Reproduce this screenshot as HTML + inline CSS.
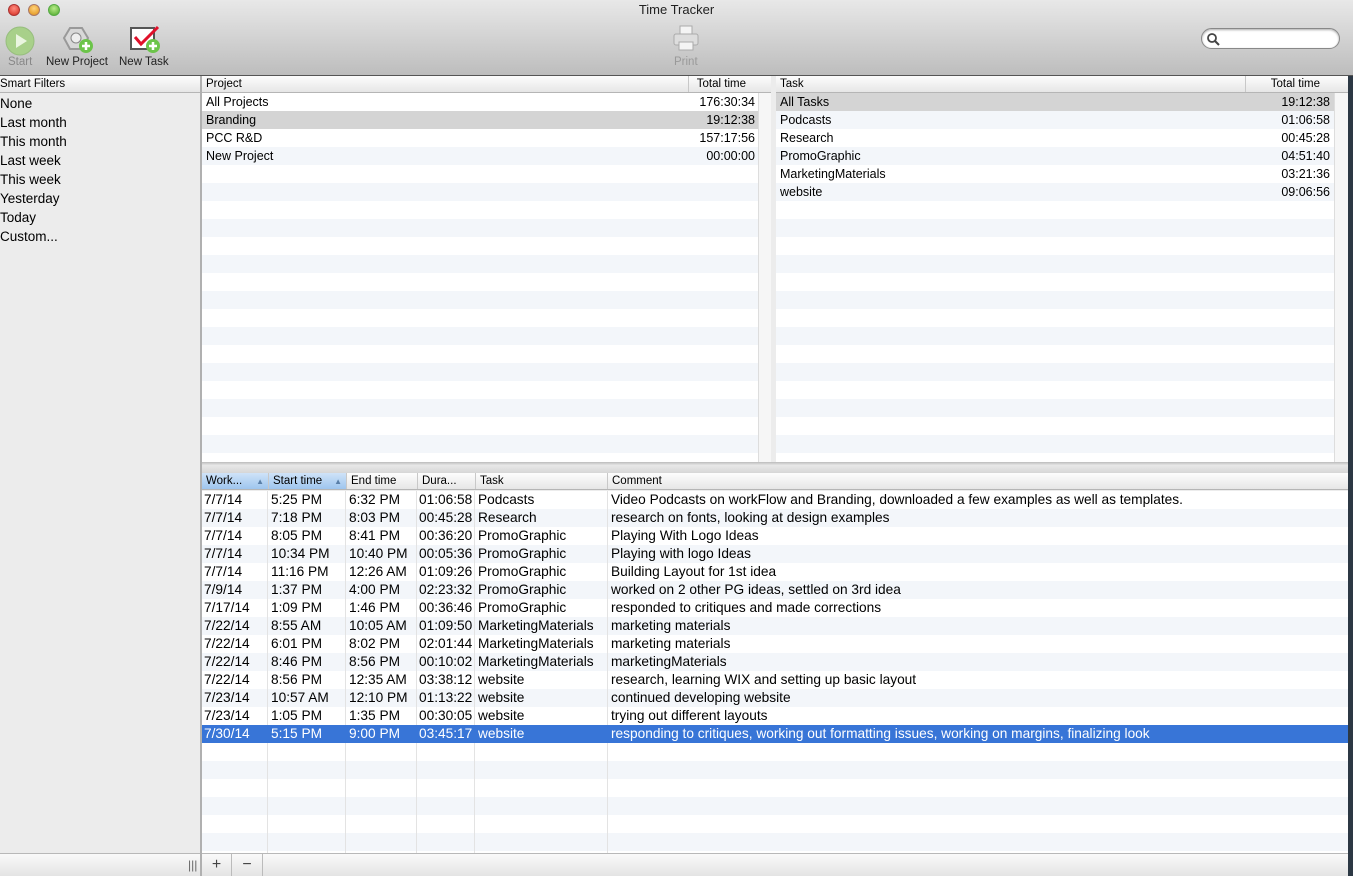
<!DOCTYPE html>
<html><head><meta charset="utf-8"><style>
*{margin:0;padding:0;box-sizing:border-box}
body{width:1353px;height:876px;overflow:hidden;position:relative;background:#ececec;font-family:"Liberation Sans","DejaVu Sans",sans-serif;font-size:12.5px;color:#000}
.a{position:absolute}
.tb{left:0;top:0;width:1353px;height:76px;background:linear-gradient(#e8e8e8,#bdbdbd);border-bottom:1px solid #555}
.hdr{height:17px;background:linear-gradient(#fdfdfd,#e6e6e6);border-bottom:1px solid #b5b5b5;font-size:11.5px;line-height:17px}
.hdr span{position:absolute;top:0;padding-left:4px;border-left:1px solid #c8c8c8;height:16px}
.stripe{background:repeating-linear-gradient(#fff 0,#fff 18px,#f3f6fa 18px,#f3f6fa 36px)}
.row{position:absolute;height:18px;line-height:18px;white-space:nowrap}
.r{text-align:right}
.c span{position:absolute;top:0}
</style></head><body>
<div class="a tb">
 <div class="a" style="left:8px;top:4px;width:12px;height:12px;border-radius:6px;background:radial-gradient(circle at 50% 35%,#ff8d80,#d42a1e);border:1px solid #a33"></div>
 <div class="a" style="left:28px;top:4px;width:12px;height:12px;border-radius:6px;background:radial-gradient(circle at 50% 35%,#ffd27a,#de8f14);border:1px solid #a76"></div>
 <div class="a" style="left:48px;top:4px;width:12px;height:12px;border-radius:6px;background:radial-gradient(circle at 50% 35%,#b8ec8a,#4ea628);border:1px solid #5a4"></div>
 <div class="a" style="left:0;width:1353px;top:2px;text-align:center;font-size:13px;color:#222">Time Tracker</div>
 <svg class="a" style="left:4px;top:25px" width="32" height="32"><circle cx="16" cy="16" r="14" fill="#a8d08a" stroke="#97bd7e"/><path d="M12 9 L23 16 L12 23Z" fill="#eaf5e0"/></svg>
 <div class="a" style="left:8px;top:56px;font-size:11.5px;color:#888">Start</div>
 <svg class="a" style="left:60px;top:25px" width="36" height="30"><path d="M10 3 L22 3 L28 13 L22 24 L10 24 L4 13Z" fill="#d8d8d8" stroke="#999" stroke-width="2"/><circle cx="16" cy="13" r="5" fill="#eee" stroke="#888"/><circle cx="26" cy="21" r="7" fill="#6cc44a"/><path d="M26 17v8M22 21h8" stroke="#fff" stroke-width="2.5"/></svg>
 <div class="a" style="left:46px;top:56px;font-size:11.5px;color:#222">New Project</div>
 <svg class="a" style="left:128px;top:25px" width="36" height="30"><rect x="3" y="3" width="23" height="21" fill="#fff" stroke="#555" stroke-width="2"/><path d="M7 12 L13 19 L30 2" fill="none" stroke="#e0102a" stroke-width="3"/><circle cx="25" cy="21" r="7" fill="#6cc44a"/><path d="M25 17v8M21 21h8" stroke="#fff" stroke-width="2.5"/></svg>
 <div class="a" style="left:119px;top:56px;font-size:11.5px;color:#222">New Task</div>
 <svg class="a" style="left:672px;top:24px" width="28" height="30"><rect x="8" y="2" width="12" height="8" fill="#f4f4f4" stroke="#aaa"/><rect x="2" y="10" width="24" height="11" rx="2" fill="#ddd" stroke="#aaa"/><rect x="7" y="18" width="14" height="8" fill="#f4f4f4" stroke="#aaa"/></svg>
 <div class="a" style="left:674px;top:56px;font-size:11.5px;color:#999">Print</div>
 <div class="a" style="left:1201px;top:28px;width:139px;height:21px;border-radius:11px;background:#fff;border:1px solid #888;box-shadow:inset 0 1px 2px #aaa"></div>
 <svg class="a" style="left:1206px;top:32px" width="14" height="14"><circle cx="6" cy="6" r="4" fill="none" stroke="#444" stroke-width="1.8"/><path d="M9 9l4 4" stroke="#444" stroke-width="2"/></svg>
</div>
<div class="a" style="left:1348px;top:76px;width:5px;height:800px;background:#2c3844"></div>

<!-- sidebar -->
<div class="a hdr" style="left:0;top:76px;width:200px"><span style="left:-4px;border:0;padding-left:4px">Smart Filters</span></div>
<div class="a" style="left:200px;top:76px;width:2px;height:800px;background:#b0b0b0"></div>
<div class="a" style="left:0;top:94px;font-size:13.5px;line-height:19px">None<br>Last month<br>This month<br>Last week<br>This week<br>Yesterday<br>Today<br>Custom...</div>

<!-- project pane -->
<div class="a hdr" style="left:202px;top:76px;width:569px"><span style="left:0;border:0">Project</span><span style="left:486px;width:72px;text-align:right;padding-right:14px">Total time</span></div>
<div class="a stripe" style="left:202px;top:93px;width:556px;height:369px"></div>
<div class="a" style="left:758px;top:93px;width:13px;height:369px;background:#f6f6f6;border-left:1px solid #ddd"></div>
<div class="row" style="left:202px;top:111px;width:556px;background:#d4d4d4"></div>
<div class="row" style="left:206px;top:93px">All Projects</div><div class="row r" style="left:600px;top:93px;width:155px">176:30:34</div>
<div class="row" style="left:206px;top:111px">Branding</div><div class="row r" style="left:600px;top:111px;width:155px">19:12:38</div>
<div class="row" style="left:206px;top:129px">PCC R&amp;D</div><div class="row r" style="left:600px;top:129px;width:155px">157:17:56</div>
<div class="row" style="left:206px;top:147px">New Project</div><div class="row r" style="left:600px;top:147px;width:155px">00:00:00</div>
<div class="a" style="left:202px;top:462px;width:1146px;height:11px;background:linear-gradient(#bbb,#e8e8e8 30%,#d6d6d6)"></div>

<!-- task pane -->
<div class="a hdr" style="left:776px;top:76px;width:572px"><span style="left:0;border:0">Task</span><span style="left:469px;width:89px;text-align:right;padding-right:14px">Total time</span></div>
<div class="a stripe" style="left:776px;top:93px;width:558px;height:369px"></div>
<div class="a" style="left:1334px;top:93px;width:14px;height:369px;background:#f6f6f6;border-left:1px solid #ddd"></div>
<div class="row" style="left:776px;top:93px;width:558px;background:#d4d4d4"></div>
<div class="row" style="left:780px;top:93px">All Tasks</div><div class="row r" style="left:1180px;top:93px;width:150px">19:12:38</div>
<div class="row" style="left:780px;top:111px">Podcasts</div><div class="row r" style="left:1180px;top:111px;width:150px">01:06:58</div>
<div class="row" style="left:780px;top:129px">Research</div><div class="row r" style="left:1180px;top:129px;width:150px">00:45:28</div>
<div class="row" style="left:780px;top:147px">PromoGraphic</div><div class="row r" style="left:1180px;top:147px;width:150px">04:51:40</div>
<div class="row" style="left:780px;top:165px">MarketingMaterials</div><div class="row r" style="left:1180px;top:165px;width:150px">03:21:36</div>
<div class="row" style="left:780px;top:183px">website</div><div class="row r" style="left:1180px;top:183px;width:150px">09:06:56</div>

<!-- bottom table -->
<div class="a hdr" style="left:202px;top:473px;width:1146px;height:17px">
 <span style="left:0;width:66px;border:0;background:linear-gradient(#cfe3f8,#9ec5ee)">Work...<b style="position:absolute;right:4px;font-size:8px;color:#5a7fa8">▲</b></span>
 <span style="left:66px;width:78px;background:linear-gradient(#cfe3f8,#9ec5ee)">Start time<b style="position:absolute;right:4px;font-size:8px;color:#5a7fa8">▲</b></span>
 <span style="left:144px">End time</span><span style="left:215px">Dura...</span><span style="left:273px">Task</span><span style="left:405px">Comment</span>
</div>
<div class="a stripe" style="left:202px;top:491px;width:1146px;height:362px"></div>
<div class="a" style="left:267px;top:491px;width:1px;height:362px;background:#e3e3e3"></div>
<div class="a" style="left:345px;top:491px;width:1px;height:362px;background:#e3e3e3"></div>
<div class="a" style="left:416px;top:491px;width:1px;height:362px;background:#e3e3e3"></div>
<div class="a" style="left:474px;top:491px;width:1px;height:362px;background:#e3e3e3"></div>
<div class="a" style="left:607px;top:491px;width:1px;height:362px;background:#e3e3e3"></div>
<div class="row" style="left:202px;top:725px;width:1146px;background:#3875d7"></div>
<div class="a c" style="left:0;top:491px;width:1348px;height:360px;line-height:18px;white-space:nowrap;font-size:13.7px">
<div style="position:relative;height:18px"><span style="left:204px">7/7/14</span><span style="left:271px">5:25 PM</span><span style="left:349px">6:32 PM</span><span style="left:419px">01:06:58</span><span style="left:478px">Podcasts</span><span style="left:611px">Video Podcasts on workFlow and Branding, downloaded a few examples as well as templates.</span></div>
<div style="position:relative;height:18px"><span style="left:204px">7/7/14</span><span style="left:271px">7:18 PM</span><span style="left:349px">8:03 PM</span><span style="left:419px">00:45:28</span><span style="left:478px">Research</span><span style="left:611px">research on fonts, looking at design examples</span></div>
<div style="position:relative;height:18px"><span style="left:204px">7/7/14</span><span style="left:271px">8:05 PM</span><span style="left:349px">8:41 PM</span><span style="left:419px">00:36:20</span><span style="left:478px">PromoGraphic</span><span style="left:611px">Playing With Logo Ideas</span></div>
<div style="position:relative;height:18px"><span style="left:204px">7/7/14</span><span style="left:271px">10:34 PM</span><span style="left:349px">10:40 PM</span><span style="left:419px">00:05:36</span><span style="left:478px">PromoGraphic</span><span style="left:611px">Playing with logo Ideas</span></div>
<div style="position:relative;height:18px"><span style="left:204px">7/7/14</span><span style="left:271px">11:16 PM</span><span style="left:349px">12:26 AM</span><span style="left:419px">01:09:26</span><span style="left:478px">PromoGraphic</span><span style="left:611px">Building Layout for 1st idea</span></div>
<div style="position:relative;height:18px"><span style="left:204px">7/9/14</span><span style="left:271px">1:37 PM</span><span style="left:349px">4:00 PM</span><span style="left:419px">02:23:32</span><span style="left:478px">PromoGraphic</span><span style="left:611px">worked on 2 other PG ideas, settled on 3rd idea</span></div>
<div style="position:relative;height:18px"><span style="left:204px">7/17/14</span><span style="left:271px">1:09 PM</span><span style="left:349px">1:46 PM</span><span style="left:419px">00:36:46</span><span style="left:478px">PromoGraphic</span><span style="left:611px">responded to critiques and made corrections</span></div>
<div style="position:relative;height:18px"><span style="left:204px">7/22/14</span><span style="left:271px">8:55 AM</span><span style="left:349px">10:05 AM</span><span style="left:419px">01:09:50</span><span style="left:478px">MarketingMaterials</span><span style="left:611px">marketing materials</span></div>
<div style="position:relative;height:18px"><span style="left:204px">7/22/14</span><span style="left:271px">6:01 PM</span><span style="left:349px">8:02 PM</span><span style="left:419px">02:01:44</span><span style="left:478px">MarketingMaterials</span><span style="left:611px">marketing materials</span></div>
<div style="position:relative;height:18px"><span style="left:204px">7/22/14</span><span style="left:271px">8:46 PM</span><span style="left:349px">8:56 PM</span><span style="left:419px">00:10:02</span><span style="left:478px">MarketingMaterials</span><span style="left:611px">marketingMaterials</span></div>
<div style="position:relative;height:18px"><span style="left:204px">7/22/14</span><span style="left:271px">8:56 PM</span><span style="left:349px">12:35 AM</span><span style="left:419px">03:38:12</span><span style="left:478px">website</span><span style="left:611px">research, learning WIX and setting up basic layout</span></div>
<div style="position:relative;height:18px"><span style="left:204px">7/23/14</span><span style="left:271px">10:57 AM</span><span style="left:349px">12:10 PM</span><span style="left:419px">01:13:22</span><span style="left:478px">website</span><span style="left:611px">continued developing website</span></div>
<div style="position:relative;height:18px"><span style="left:204px">7/23/14</span><span style="left:271px">1:05 PM</span><span style="left:349px">1:35 PM</span><span style="left:419px">00:30:05</span><span style="left:478px">website</span><span style="left:611px">trying out different layouts</span></div>
<div style="position:relative;height:18px;color:#fff"><span style="left:204px">7/30/14</span><span style="left:271px">5:15 PM</span><span style="left:349px">9:00 PM</span><span style="left:419px">03:45:17</span><span style="left:478px">website</span><span style="left:611px">responding to critiques, working out formatting issues, working on margins, finalizing look</span></div>
</div>

<!-- bottom bar -->
<div class="a" style="left:0;top:853px;width:1348px;height:23px;background:linear-gradient(#fafafa,#e4e4e4);border-top:1px solid #b8b8b8"></div>
<div class="a" style="left:200px;top:853px;width:2px;height:23px;background:#b0b0b0"></div>
<div class="a" style="left:188px;top:858px;font-size:12px;color:#666">|||</div>
<div class="a" style="left:202px;top:854px;width:30px;height:22px;border-right:1px solid #bbb;text-align:center;font-size:16px;line-height:22px;color:#444">+</div>
<div class="a" style="left:232px;top:854px;width:31px;height:22px;border-right:1px solid #bbb;text-align:center;font-size:16px;line-height:22px;color:#444">−</div>
</body></html>
